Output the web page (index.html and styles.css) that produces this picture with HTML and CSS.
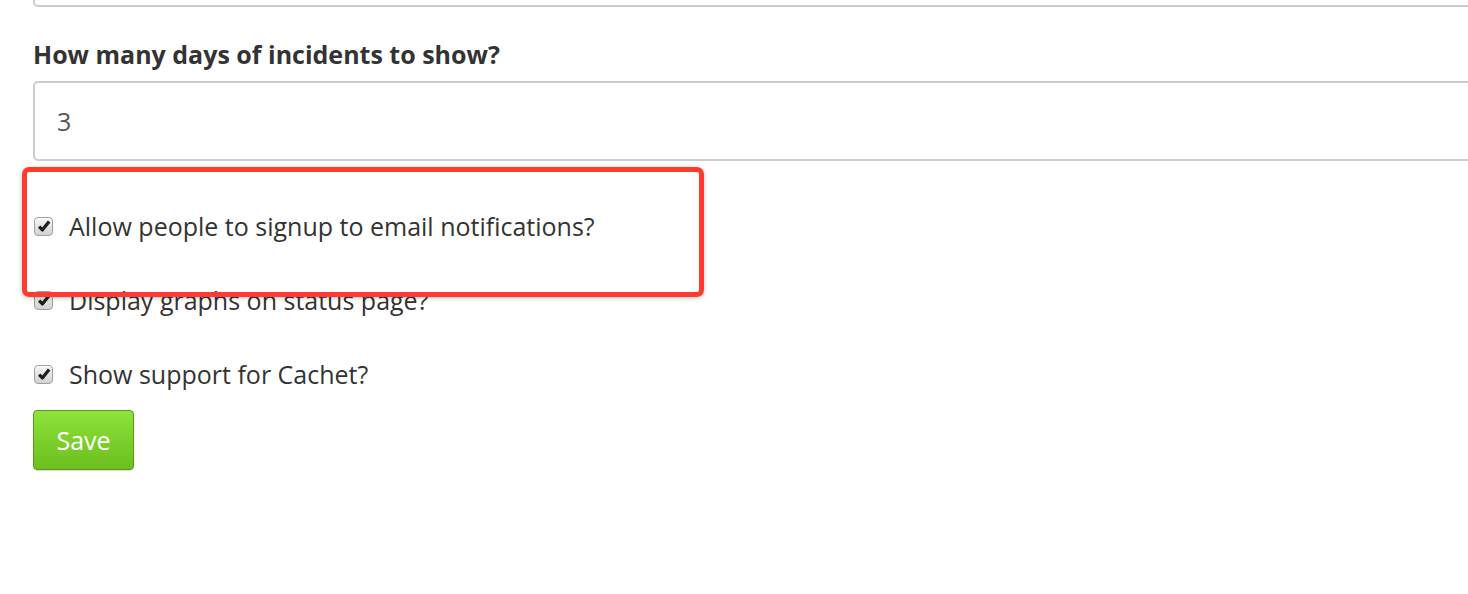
FILE: index.html
```html
<!DOCTYPE html>
<html>
<head>
<meta charset="utf-8">
<link rel="stylesheet" href="styles.css">
</head>
<body>
<div class="page">
  <form class="form">
    <input class="field field-top" type="text" value="">
    <div class="group">
      <label class="group-label">How many days of incidents to show?</label>
      <input class="field" type="text" value="3">
    </div>
    <div class="checks">
      <label class="check">
        <span class="box"><svg viewBox="0 0 12 12" width="14" height="14"><path d="M1.8 6.6 L4.6 9.4 L10.4 2.2" fill="none" stroke="#1e1e1e" stroke-width="2.8" stroke-linejoin="round"/></svg></span>
        <span class="check-text">Allow people to signup to email notifications?</span>
      </label>
      <label class="check">
        <span class="box"><svg viewBox="0 0 12 12" width="14" height="14"><path d="M1.8 6.6 L4.6 9.4 L10.4 2.2" fill="none" stroke="#1e1e1e" stroke-width="2.8" stroke-linejoin="round"/></svg></span>
        <span class="check-text">Display graphs on status page?</span>
      </label>
      <label class="check">
        <span class="box"><svg viewBox="0 0 12 12" width="14" height="14"><path d="M1.8 6.6 L4.6 9.4 L10.4 2.2" fill="none" stroke="#1e1e1e" stroke-width="2.8" stroke-linejoin="round"/></svg></span>
        <span class="check-text">Show support for Cachet?</span>
      </label>
    </div>
    <button class="save" type="button">Save</button>
  </form>
  <div class="highlight"></div>
</div>
</body>
</html>
```

FILE: styles.css
```css
html, body {
  margin: 0;
  padding: 0;
  background: #fff;
  overflow: hidden;
}
.page {
  position: relative;
  width: 1468px;
  height: 594px;
  overflow: hidden;
  font-family: "Open Sans", "Noto Sans", sans-serif;
  color: #333;
}
.form {
  display: flex;
  flex-direction: column;
  padding-left: 33px;
  width: 1480px;
}
.field {
  box-sizing: border-box;
  width: 1480px;
  height: 80px;
  border: 2px solid #ccc;
  border-radius: 5px;
  padding: 0 22px;
  font-family: "Open Sans", sans-serif;
  font-size: 25px;
  color: #555;
  background: #fff;
  outline: none;
}
.field-top {
  margin-top: -73px;
}
.group {
  display: flex;
  flex-direction: column;
}
.group-label {
  font-weight: 700;
  font-size: 25px;
  line-height: 30px;
  margin-top: 32px;
  margin-bottom: 12px;
  color: #333;
}
.checks {
  display: flex;
  flex-direction: column;
  margin-top: 50px;
  gap: 44px;
}
.check {
  display: flex;
  align-items: center;
  height: 30px;
}
.box {
  box-sizing: border-box;
  width: 19px;
  height: 19px;
  margin-left: 1px;
  margin-right: 16px;
  border: 1px solid #a0a0a0;
  border-radius: 4px;
  background: linear-gradient(#f6f6f6, #d2d2d2);
  box-shadow: inset 0 1px 0 #fff;
  display: flex;
  align-items: center;
  justify-content: center;
}
.check-text {
  font-size: 25px;
  line-height: 30px;
  color: #333;
}
.save {
  align-self: flex-start;
  margin-top: 21px;
  width: 101px;
  height: 60px;
  border: 1px solid #5a9a17;
  border-radius: 4px;
  background: linear-gradient(#8ee23a, #6cbf1e);
  color: #fff;
  font-family: "Open Sans", sans-serif;
  font-size: 25px;
  padding: 0;
  box-shadow: 0 1px 1px rgba(0,0,0,0.15);
}
.highlight {
  position: absolute;
  left: 22px;
  top: 167px;
  width: 682px;
  height: 130px;
  box-sizing: border-box;
  border: 5px solid #ff3b2f;
  border-radius: 7px;
  box-shadow: 0 1px 4px rgba(0,0,0,0.25);
}
```
